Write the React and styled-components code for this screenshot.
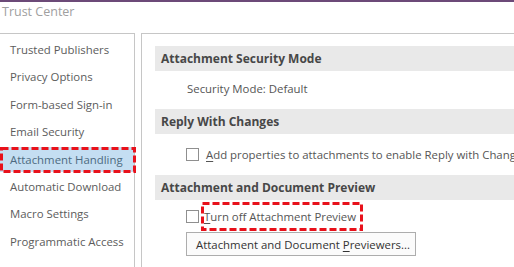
import styled, { createGlobalStyle } from 'styled-components';

const GlobalStyle = createGlobalStyle`
  html, body {
    margin: 0;
    padding: 0;
    background: #fff;
    overflow: hidden;
  }
  body {
    font-family: "Open Sans", "Noto Sans", "Liberation Sans", sans-serif;
    font-size: 11.4px;
    color: #555;
  }
`;

const Window = styled.div`
  width: 514px;
  height: 267px;
  border-top: 2px solid #6c4a78;
  box-sizing: border-box;
  display: flex;
  flex-direction: column;
`;

const Title = styled.div`
  height: 31px;
  padding-left: 2px;
  line-height: 20px;
  font-size: 12.5px;
  color: #a0a0a0;
`;

const Body = styled.div`
  flex: 1;
  display: flex;
  gap: 6px;
`;

const Nav = styled.ul`
  list-style: none;
  margin: 0;
  width: 134px;
  padding: 3px 0 0;
  border-top: 1px solid #c6c6c6;
  border-right: 1px solid #c6c6c6;
  display: flex;
  flex-direction: column;
  gap: 2.4px;
`;

const NavItem = styled.li`
  position: relative;
  height: 25px;
  line-height: 25px;
  padding-left: 10px;
  white-space: nowrap;
  color: ${(p) => (p.$active ? '#4d6a80' : '#5c5c5c')};
  background: ${(p) => (p.$active ? '#c4def2' : 'transparent')};
`;

const Content = styled.div`
  flex: 1;
  min-width: 0;
  overflow: hidden;
  border-top: 1px solid #c6c6c6;
  border-left: 1px solid #c6c6c6;
  padding: 12px 0 0 13px;
  display: flex;
  flex-direction: column;
`;

const SectionHeader = styled.div`
  height: 25px;
  line-height: 25px;
  padding-left: 6px;
  background: #e9e9e9;
  font-size: 12px;
  font-weight: 700;
  color: #474747;
  white-space: nowrap;
`;

const Row = styled.div`
  display: flex;
  align-items: center;
  height: ${(p) => p.$h || 38}px;
  padding-left: ${(p) => p.$indent || 31}px;
  padding-bottom: ${(p) => p.$lift || 0}px;
  box-sizing: border-box;
  white-space: nowrap;
  color: #555;
`;

const Checkbox = styled.span`
  flex: none;
  width: 11px;
  height: 11px;
  border: 1px solid #8f8f8f;
  background: #fff;
  margin-right: ${(p) => p.$gap || 7}px;
`;

const Key = styled.span`
  text-decoration: underline;
  text-underline-offset: 2px;
`;

const Button = styled.button`
  margin-left: 31px;
  width: 230px;
  height: 24px;
  padding: 0 0 0 9px;
  text-align: left;
  border: 1px solid #adadad;
  background: #fbfbfb;
  font: inherit;
  color: #333;
  white-space: nowrap;
`;

const HighlightWrap = styled.span`
  position: relative;
  display: inline-block;
`;

const HighlightFrame = styled.svg`
  position: absolute;
  pointer-events: none;
  overflow: visible;
`;

function DashedRect({ width, height }) {
  return (
    <rect
      x="1.5"
      y="1.5"
      width={width - 3}
      height={height - 3}
      fill="none"
      stroke="#e8111b"
      strokeWidth="3"
      strokeDasharray="7 3"
    />
  );
}

function Highlight({ children, box }) {
  const { left, top, width, height } = box;
  return (
    <HighlightWrap>
      {children}
      <HighlightFrame style={{ left, top }} width={width} height={height}>
        <DashedRect width={width} height={height} />
      </HighlightFrame>
    </HighlightWrap>
  );
}

const ActiveFrame = styled.svg`
  position: absolute;
  left: 0;
  top: 0;
  pointer-events: none;
`;

const navItems = [
  'Trusted Publishers',
  'Privacy Options',
  'Form-based Sign-in',
  'Email Security',
  'Attachment Handling',
  'Automatic Download',
  'Macro Settings',
  'Programmatic Access',
];

export default function App() {
  return (
    <>
      <GlobalStyle />
      <Window>
        <Title>Trust Center</Title>
        <Body>
          <Nav>
            {navItems.map((item) => {
              const active = item === 'Attachment Handling';
              return (
                <NavItem key={item} $active={active}>
                  {item}
                  {active && (
                    <ActiveFrame width="136" height="26">
                      <DashedRect width={136} height={26} />
                    </ActiveFrame>
                  )}
                </NavItem>
              );
            })}
          </Nav>
          <Content>
            <SectionHeader>Attachment Security Mode</SectionHeader>
            <Row $indent={32} $lift={3}>Security Mode: Default</Row>
            <SectionHeader>Reply With Changes</SectionHeader>
            <Row $h={41}>
              <Checkbox />
              <span>
                <Key>A</Key>dd properties to attachments to enable Reply with Changes
              </span>
            </Row>
            <SectionHeader>Attachment and Document Preview</SectionHeader>
            <Row $h={32}>
              <Checkbox $gap={5} />
              <Highlight box={{ left: -3, top: -7, width: 162, height: 29 }}>
                <Key>T</Key>urn off Attachment Preview
              </Highlight>
            </Row>
            <div>
              <Button>
                Attachment and Document <Key>P</Key>reviewers...
              </Button>
            </div>
          </Content>
        </Body>
      </Window>
    </>
  );
}
